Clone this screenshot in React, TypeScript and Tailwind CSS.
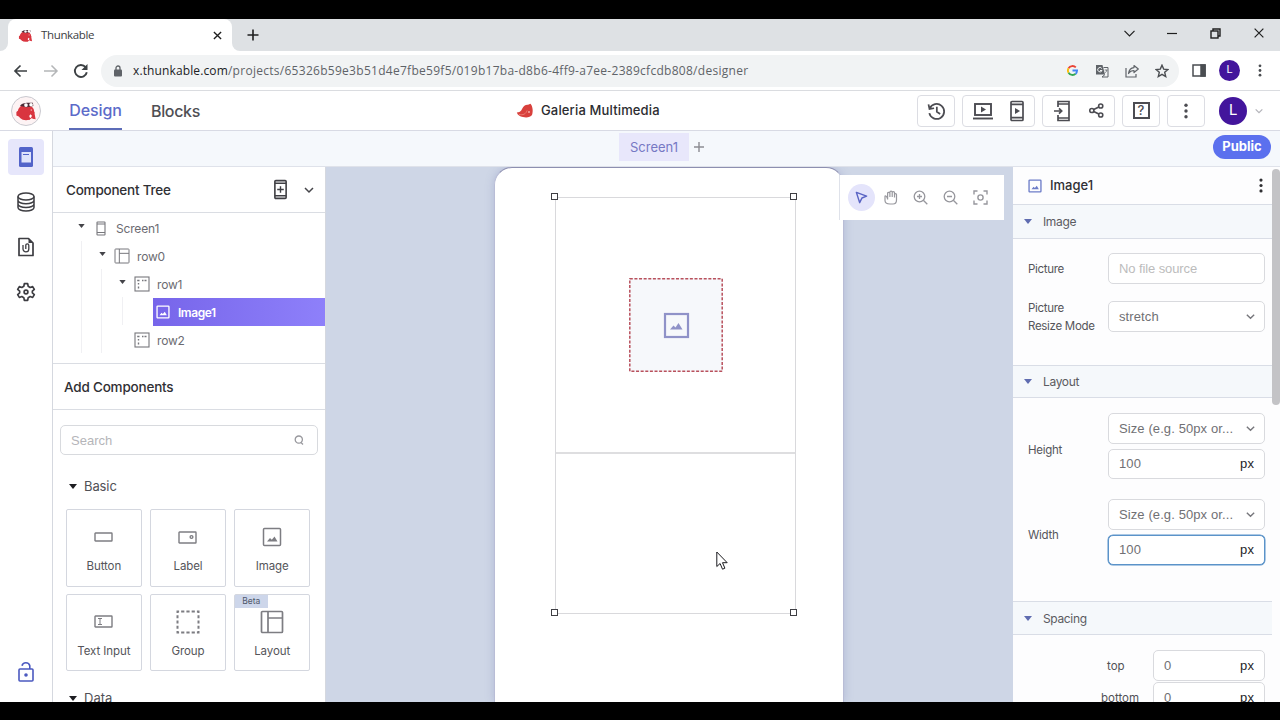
import type { ReactNode } from "react";
import clsx from "clsx";

type IconProps = { className?: string };

function Svg({
  className,
  box = "0 0 24 24",
  width = 2,
  children,
}: {
  className?: string;
  box?: string;
  width?: number;
  children: ReactNode;
}) {
  return (
    <svg
      viewBox={box}
      fill="none"
      stroke="currentColor"
      strokeWidth={width}
      className={clsx("shrink-0", className)}
    >
      {children}
    </svg>
  );
}

function Beaver({ className }: IconProps) {
  return (
    <svg viewBox="0 0 24 24" className={clsx("shrink-0", className)}>
      <ellipse cx="12" cy="13.500" rx="9.200" ry="8.500" fill="#d9353f" />
      <path d="M3.500 11.500l-2 1.500v4l4 1.500zM13 14l8-1 1.500 8-3.500-.5-1-2.500-2 3.500-3-.5z" fill="#d9353f" />
      <path d="M5.500 6.500c1-2.500 5-3.500 9-3.500h5l.5 3.500-7 1.500z" fill="#4d2a35" />
      <circle cx="12" cy="5.500" r="2" fill="#fff" />
      <circle cx="17.500" cy="5.200" r="2" fill="#fff" />
      <path d="M15.500 17.500l1.300-2 1.700 1.700-.8 1.600-1.200 1.200z" fill="#fff" />
      <circle cx="17.800" cy="11" r=".9" fill="#f3a1a5" />
    </svg>
  );
}

function Chevron({ className }: IconProps) {
  return (
    <Svg className={className} box="0 0 12 12" width={1.5}>
      <path d="M2 4l4 4 4-4" />
    </Svg>
  );
}

function Caret({ className }: IconProps) {
  return (
    <svg viewBox="0 0 8 5" className={clsx("shrink-0", className)}>
      <path d="M0 0h8L4 5z" fill="currentColor" />
    </svg>
  );
}

function Dots({ className }: IconProps) {
  return (
    <svg viewBox="0 0 4 16" fill="currentColor" className={clsx("shrink-0", className)}>
      <circle cx="2" cy="2.200" r="1.700" />
      <circle cx="2" cy="8" r="1.700" />
      <circle cx="2" cy="13.800" r="1.700" />
    </svg>
  );
}

function ImageIcon({ className, width = 1.9 }: IconProps & { width?: number }) {
  return (
    <Svg className={className} box="0 0 20 20" width={width}>
      <rect x="1.500" y="1.500" width="17" height="17" rx="1" />
      <path d="M5 14.500l3-3.500 1.800 1.800L12.500 9.500l3 5z" fill="currentColor" stroke="none" />
    </Svg>
  );
}

function LayoutIcon({ className, width = 1.8 }: IconProps & { width?: number }) {
  return (
    <Svg className={className} box="0 0 24 24" width={width}>
      <rect x="1.500" y="1.500" width="21" height="21" rx="1" />
      <path d="M8 1.500v21M8 8h14.500" />
    </Svg>
  );
}

function RowIcon({ className }: IconProps) {
  return (
    <Svg className={className} box="0 0 16 16" width={1.1}>
      <rect x="1" y="1" width="14" height="14" />
      <path d="M3.200 4.500h2.300M8 4.500h1.500M10.500 4.500h2M4.500 7v1.500M4.500 10.500v2" strokeWidth="1.400" />
    </Svg>
  );
}

function PhoneIcon({ className, children }: IconProps & { children?: ReactNode }) {
  return (
    <Svg className={className} box="0 0 16 22" width={1.7}>
      <rect x="2" y="1.500" width="12" height="19" rx="1" />
      <path d="M2 4.300h12M2 17.700h12" />
      {children}
    </Svg>
  );
}

function ScreenSmall({ className }: IconProps) {
  return (
    <Svg className={className} box="0 0 10 15" width={1.1}>
      <rect x="1" y="1" width="8" height="13" rx=".5" />
      <path d="M1 3h8M1 11.500h8" />
    </Svg>
  );
}

function BrowserTabs() {
  return (
    <div className="flex h-8 shrink-0 items-stretch bg-[#dee1e4] text-[#1f1f1f]">
      <div className="flex w-2 bg-white">
        <div className="w-full rounded-br-lg bg-[#dee1e4]" />
      </div>
      <div className="flex w-[224px] items-center rounded-t-lg bg-white pl-[10px] pr-[10px]">
        <Beaver className="size-[15px]" />
        <span className="ml-2 flex-1 font-['Open_Sans',sans-serif] text-[11.500px] tracking-[-0.350px] text-[#3c4043]">
          Thunkable
        </span>
        <Svg className="size-[9px]" box="0 0 10 10" width={1.5}>
          <path d="M1 1l8 8M9 1l-8 8" />
        </Svg>
      </div>
      <div className="flex w-2 bg-white">
        <div className="w-full rounded-bl-lg bg-[#dee1e4]" />
      </div>
      <div className="flex flex-1 items-center pl-[7px]">
        <Svg className="size-3" box="0 0 12 12" width={1.6}>
          <path d="M6 .5v11M.5 6h11" />
        </Svg>
      </div>
      <div className="flex items-center pb-1 pr-[16px]">
        <Svg className="mr-[32px] h-[7px] w-[11px]" box="0 0 11 7" width={1.2}>
          <path d="M.5 .8L5.500 6l5-5.200" />
        </Svg>
        <Svg className="mr-[33px] h-[10px] w-[10px]" box="0 0 10 10" width={1.2}>
          <path d="M0 5.500h10" />
        </Svg>
        <Svg className="mr-[33px] size-[11px]" box="0 0 11 11" width={1.4}>
          <rect x="1" y="3" width="7" height="7" />
          <path d="M3 3V1h7v7H8" />
        </Svg>
        <Svg className="size-[10px]" box="0 0 11 11" width={1.3}>
          <path d="M.7 .7l9.600 9.600M10.300 .7L.7 10.300" />
        </Svg>
      </div>
    </div>
  );
}

function AddressBar() {
  return (
    <div className="flex h-10 shrink-0 items-center border-b border-[#dadce0] bg-white pl-[13px] pr-[18px]">
      <Svg className="h-4 w-[15px] text-[#3c4043]" box="0 0 15 16" width={1.7}>
        <path d="M14 8H2M7.500 2.500L2 8l5.500 5.500" />
      </Svg>
      <Svg className="ml-4 h-4 w-[15px] text-[#b4b6b8]" box="0 0 15 16" width={1.5}>
        <path d="M0 8h12.500M7.500 2.500L13 8l-5.500 5.500" />
      </Svg>
      <Svg className="ml-[14px] size-4 text-[#3c4043]" box="0 0 16 16" width={1.9}>
        <path d="M13.800 9.200A6 6 0 1 1 12.600 4.200" />
        <path d="M14.500 1v6h-6z" fill="currentColor" stroke="none" />
      </Svg>
      <div className="ml-[12px] flex h-8 w-[1078px] items-center rounded-full bg-[#f1f3f4] pl-[12px] pr-[10px]">
        <svg viewBox="0 0 10 12" className="h-[12px] w-[10px] shrink-0 text-[#5f6368]">
          <rect x="1" y="4.500" width="8" height="7" rx="1" fill="currentColor" />
          <path d="M3 5V3a2 2 0 0 1 4 0v2" fill="none" stroke="currentColor" strokeWidth="1.300" />
        </svg>
        <span className="ml-[10px] flex-1 whitespace-nowrap font-['Open_Sans',sans-serif] text-[12px] tracking-[0.280px] text-[#5f6368]">
          <span className="tracking-[0.120px] text-[#202124]">x.thunkable.com</span>
          /projects/65326b59e3b51d4e7fbe59f5/019b17ba-d8b6-4ff9-a7ee-2389cfcdb808/designer
        </span>
        <svg viewBox="0 0 12 12" className="size-[11px] shrink-0" fill="none" strokeWidth="2">
          <path d="M9.600 2.600A5 5 0 0 0 1.700 3.600" stroke="#ea4335" />
          <path d="M1.700 3.500a5 5 0 0 0 0 5" stroke="#fbbc05" />
          <path d="M1.700 8.400a5 5 0 0 0 7.800 1.100" stroke="#34a853" />
          <path d="M6 6h5a5 5 0 0 1-1.600 3.600" stroke="#4285f4" />
        </svg>
        <svg viewBox="0 0 14 14" className="ml-[17px] size-[14px] shrink-0">
          <path d="M1 1h6.500l2.500 9.500H1z" fill="#5f6368" />
          <path d="M8.500 3.500H13V13H7l3-2.500" fill="none" stroke="#5f6368" />
          <path d="M6.800 4.500A2.200 2.200 0 1 0 7 6.500H5" fill="none" stroke="#f1f3f4" />
          <path d="M9.600 6h2.800M11.800 6c-.2 1.500-1 2.200-1.600 2.800" fill="none" stroke="#5f6368" strokeWidth=".8" />
        </svg>
        <Svg className="ml-[16px] size-[14px] text-[#5f6368]" box="0 0 14 14" width={1.2}>
          <path d="M1 4v9h10v-3" />
          <path d="M9 1.500L13.300 5 9 8.500V6.500C6.500 6.500 4.800 7.500 3.500 9.500 4 6 6 3.800 9 3.600z" strokeLinejoin="round" />
        </Svg>
        <Svg className="ml-4 size-[14px] text-[#4a4d51]" box="0 0 14 14" width={1.4}>
          <path d="M7 1.200l1.700 3.900 4.200.4-3.200 2.800 1 4.200L7 10.300l-3.700 2.200 1-4.200L1.100 5.500l4.200-.4z" />
        </Svg>
      </div>
      <Svg className="ml-[13px] h-[13px] w-[14px] text-[#4a4d51]" box="0 0 14 13" width={1.5}>
        <path d="M1 1h12v11H1z" />
        <path d="M9 1h4v11H9z" fill="currentColor" />
      </Svg>
      <div className="ml-[13px] flex size-[21px] items-center justify-center rounded-full bg-[#43159c] font-['Roboto',sans-serif] text-[11px] text-white">
        L
      </div>
      <Dots className="ml-[18px] h-[13px] w-[4px] text-[#4a4d51]" />
    </div>
  );
}

function HeaderBox({ className, children }: { className?: string; children: ReactNode }) {
  return (
    <div
      className={clsx(
        "flex h-8 shrink-0 items-center justify-center rounded-[4px] border border-[#dcdde3] text-[#4c4c52]",
        className,
      )}
    >
      {children}
    </div>
  );
}

function AppHeader() {
  return (
    <div className="flex h-10 shrink-0 items-stretch border-b border-[#d8dae4] bg-white pl-[11px]">
      <div className="mt-[5px] flex size-[30px] items-center justify-center rounded-full border border-[#c9c9cf] bg-[#fdf3f4]">
        <Beaver className="size-[22px]" />
      </div>
      <div className="ml-7 flex w-[53px] justify-center border-b-2 border-[#5c6cb8] pt-[7px] text-[16px] font-medium tracking-[-0.1px] text-[#5c6bc9]">
        Design
      </div>
      <div className="ml-[29px] w-[52px] pt-[7.500px] text-[16px] font-medium tracking-[-0.350px] text-[#4f4f54]">
        Blocks
      </div>
      <div className="ml-[313px] flex w-[150px] items-center whitespace-nowrap">
        <svg viewBox="0 0 18 15" className="h-[15px] w-[18px] shrink-0">
          <path
            d="M.8 9.500C3 9.500 5 8.500 6.300 5.500 7.500 3 9.500 1.500 12 1.800L14.500.8C16.500 3 17.500 8 16 12c-1.500 2.500-6 2.800-9 2C4 13.500 1.500 12 .8 9.500z"
            fill="#d8403c"
          />
          <path d="M3 11.300c4 1.200 7-.3 8-3.800" fill="none" stroke="#ec7a70" />
          <circle cx="13" cy="9" r="1" fill="#f3aaa4" />
        </svg>
        <span className="ml-[7px] text-[13px] font-medium tracking-[0.150px] text-[#2c2c30]">
          Galeria Multimedia
        </span>
      </div>
      <div className="ml-auto flex items-center pr-[16px]">
        <HeaderBox className="mr-[7px] w-[38px]">
          <Svg className="size-[20px]" box="0 0 24 24" width={2.1}>
            <path d="M4.500 9A9 9 0 1 1 4 14.500M3 4l1.200 5.500 5.500-.8M13 7v6l4 2.500" />
          </Svg>
        </HeaderBox>
        <HeaderBox className="mr-[7px] w-[73px] gap-[15px]">
          <Svg className="h-[18px] w-[22px]" box="0 0 22 18" width={1.9}>
            <rect x="3" y="2" width="16" height="11" />
            <path d="M1 16.500h20" />
            <path d="M9 4.500l5 3-5 3z" fill="currentColor" stroke="none" />
          </Svg>
          <PhoneIcon className="h-[22px] w-4">
            <path d="M6 8l5 3-5 3z" fill="currentColor" stroke="none" />
          </PhoneIcon>
        </HeaderBox>
        <HeaderBox className="mr-[7px] w-[73px] gap-[19px]">
          <Svg className="h-[22px] w-4" box="0 0 16 22" width={1.7}>
            <path d="M4 7V1.500h11v19H4V15M4 4h11M4 18h11M0 11h7.500M5 8.300L7.700 11 5 13.700" />
          </Svg>
          <Svg className="size-[15px]" box="0 0 16 16" width={1.7}>
            <circle cx="3" cy="8" r="2.200" />
            <circle cx="12.500" cy="3.200" r="2.200" />
            <circle cx="12.500" cy="12.800" r="2.200" />
            <path d="M5 7l5.500-2.800M5 9l5.500 2.800" />
          </Svg>
        </HeaderBox>
        <HeaderBox className="mr-[7px] w-[38px]">
          <div className="flex size-[17px] items-center justify-center border-2 border-current text-[13px] font-medium leading-none">
            ?
          </div>
        </HeaderBox>
        <HeaderBox className="mr-[14px] w-[38px]">
          <Dots className="h-4 w-[4px]" />
        </HeaderBox>
        <div className="flex size-7 items-center justify-center rounded-full bg-[#43159c] font-['Roboto',sans-serif] text-[15px] text-white">
          L
        </div>
        <Chevron className="ml-[7px] size-[10px] text-[#b5b5bb]" />
      </div>
    </div>
  );
}

function Rail() {
  return (
    <div className="flex w-[53px] shrink-0 flex-col items-center border-r border-[#d5d8df] bg-white pb-[20px] pt-2 text-[#3d3d42]">
      <div className="flex size-9 items-center justify-center rounded-[4px] bg-[#e6e6fb]">
        <svg viewBox="0 0 14 20" className="h-5 w-[14px]">
          <rect width="14" height="20" rx="1.500" fill="#5263c9" />
          <rect x="2.500" y="5" width="9.500" height="10.500" fill="#dfe3fb" />
          <path d="M4 7.500h6" stroke="#5263c9" />
        </svg>
      </div>
      <Svg className="mt-[17px] size-5" box="0 0 20 20" width={1.5}>
        <ellipse cx="10" cy="4.500" rx="8" ry="3.500" />
        <path d="M2 4.500v11c0 2 3.500 3.500 8 3.500s8-1.500 8-3.500v-11M2 8.200c0 2 3.500 3.500 8 3.500s8-1.500 8-3.500M2 12c0 2 3.500 3.500 8 3.500s8-1.500 8-3.500" />
      </Svg>
      <Svg className="mt-[25px] h-5 w-4" box="0 0 16 20" width={1.7}>
        <path d="M1 1.500h9.500L15 6v12.500H1z" strokeLinejoin="round" />
        <path
          d="M5 8v4a2.900 2.900 0 0 0 5.800 0V8.300a1.500 1.500 0 0 0-3 0V12"
          strokeWidth="1.300"
        />
        <path d="M10.500 1.500V6H15z" fill="currentColor" stroke="none" />
      </Svg>
      <Svg className="mt-[25px] size-[20px]" box="0 0 24 24" width={2}>
        <path
          d="M10 2h4l.6 3.100 2.400 1.400 3-1 2 3.400L19.600 11v2l2.400 2.100-2 3.400-3-1-2.400 1.400L14 22h-4l-.6-3.100L7 17.500l-3 1-2-3.400L4.400 13v-2L2 8.900l2-3.400 3 1 2.400-1.400z"
          strokeLinejoin="round"
        />
        <circle cx="12" cy="12" r="2.300" />
      </Svg>
      <Svg className="mt-auto h-[21px] w-4 text-[#4b59c0]" box="0 0 16 21" width={1.6}>
        <rect x="1" y="8" width="14" height="12" rx="1" />
        <path d="M4 4.800A4 4 0 0 1 11.800 4.800V8" />
        <circle cx="8" cy="14" r="1" fill="currentColor" />
      </Svg>
    </div>
  );
}

function ScreenTabs() {
  return (
    <div className="flex h-9 shrink-0 items-center border-b border-[#dfe2ea] bg-[#f5f8fc] pl-[566px] pr-[9px]">
      <div className="mb-[3px] flex h-7 w-[70px] items-center justify-center bg-[#e8e7fb] pt-px text-[13px] text-[#7678c4]">
        Screen1
      </div>
      <Svg className="mb-[3px] ml-[5px] size-[10px] text-[#8c8c92]" box="0 0 10 10" width={1.4}>
        <path d="M5 0v10M0 5h10" />
      </Svg>
      <div className="mb-[3px] ml-auto flex h-6 w-[58px] items-center justify-center rounded-full bg-[#5b70ee] text-[13px] font-bold text-white">
        Public
      </div>
    </div>
  );
}

function TreeRow({
  indent,
  open,
  icon,
  label,
}: {
  indent: string;
  open?: boolean;
  icon: ReactNode;
  label: string;
}) {
  return (
    <div className={clsx("flex h-7 items-center text-[12px] text-[#6b6b71]", indent)}>
      <div className="mb-1 w-[13px]">
        {open && <Caret className="h-[4px] w-[7px] text-[#444449]" />}
      </div>
      <div className="flex w-[25px] justify-center pr-[5px] text-[#77777c]">{icon}</div>
      <span className="pt-px tracking-[-0.180px]">{label}</span>
    </div>
  );
}

function ComponentTree() {
  return (
    <div className="h-[197px] shrink-0 border-b border-[#dadde3]">
      <div className="flex h-[46px] items-center border-b border-[#dadde3] pl-[13px] pr-[10px]">
        <span className="pt-px text-[13.500px] font-medium tracking-[-0.220px] text-[#303034]">
          Component Tree
        </span>
        <PhoneIcon className="ml-auto h-[21px] w-[15px] text-[#3f3f44]">
          <path d="M8 7.500v7M4.500 11h7" strokeWidth="1.500" />
        </PhoneIcon>
        <Chevron className="ml-[15px] size-3 text-[#45454a]" />
      </div>
      <div className="relative pt-px">
        <div className="absolute left-[28px] top-[28px] h-[112px] w-px bg-[#f0f0f3]" />
        <div className="absolute left-[48px] top-[56px] h-[84px] w-px bg-[#f0f0f3]" />
        <div className="absolute left-[69px] top-[84px] h-[28px] w-px bg-[#f0f0f3]" />
        <TreeRow indent="pl-[25px]" open icon={<ScreenSmall className="h-[15px] w-[10px]" />} label="Screen1" />
        <TreeRow indent="pl-[46px]" open icon={<LayoutIcon className="size-4" width={1.5} />} label="row0" />
        <TreeRow indent="pl-[66px]" open icon={<RowIcon className="size-4" />} label="row1" />
        <div className="ml-[100px] flex h-7 items-center bg-linear-to-r from-[#7765ea] to-[#8e80fa] pl-[3px] text-white">
          <ImageIcon className="size-[14px]" />
          <span className="ml-[8px] pt-px text-[12px] font-semibold tracking-[-0.450px]">Image1</span>
        </div>
        <TreeRow indent="pl-[66px]" icon={<RowIcon className="size-4" />} label="row2" />
      </div>
    </div>
  );
}

const basic = [
  {
    label: "Button",
    icon: (
      <Svg className="h-[10px] w-[19px]" box="0 0 19 10" width={1.4}>
        <rect x="1" y="1" width="17" height="8" rx=".5" />
      </Svg>
    ),
  },
  {
    label: "Label",
    icon: (
      <Svg className="h-[13px] w-[19px]" box="0 0 19 13" width={1.4}>
        <rect x="1" y="1" width="17" height="11" rx=".5" />
        <circle cx="13.500" cy="6" r="1.400" />
      </Svg>
    ),
  },
  { label: "Image", icon: <ImageIcon className="size-5" width={1.5} /> },
  {
    label: "Text Input",
    icon: (
      <Svg className="h-[13px] w-[19px]" box="0 0 19 13" width={1.4}>
        <rect x="1" y="1" width="17" height="11" rx=".5" />
        <path d="M4 3.500h4M6 3.500v6M4 9.500h4" strokeWidth="1" />
      </Svg>
    ),
  },
  {
    label: "Group",
    icon: (
      <Svg className="size-6" box="0 0 24 24" width={2}>
        <rect x="1.500" y="1.500" width="21" height="21" strokeDasharray="3.200 2.050" strokeDashoffset="1.600" />
      </Svg>
    ),
  },
  { label: "Layout", icon: <LayoutIcon className="size-6" width={1.7} />, beta: true },
];

function AddComponents() {
  return (
    <div className="flex-1">
      <div className="flex h-[46px] items-center border-b border-[#dadde3] pl-[11px] pt-px text-[13.500px] font-medium tracking-[-0.2px] text-[#303034]">
        Add Components
      </div>
      <div className="mx-[7px] mt-[15px] flex h-[30px] w-[258px] items-center rounded-[5px] border border-[#d8dade] pl-[10px] pr-[13px] font-['Liberation_Sans',sans-serif] text-[13px] text-[#b5b5b9]">
        <span className="flex-1 pt-px">Search</span>
        <Svg className="size-[10px] text-[#98989d]" box="0 0 10 10" width={1.3}>
          <circle cx="4.800" cy="4.600" r="3.600" />
          <path d="M7 7.500L9 9.500" />
        </Svg>
      </div>
      <div className="mt-[21px] flex h-5 items-center pl-4 text-[13px] text-[#515156]">
        <Caret className="h-[5px] w-[8px] text-[#1e1e22]" />
        <span className="ml-[7px] pt-px tracking-[-0.1px]">Basic</span>
      </div>
      <div className="ml-[12.500px] mt-[13px] grid w-[245px] grid-cols-3 gap-x-[7.500px] gap-y-[7px]">
        {basic.map((item) => (
          <div
            key={item.label}
            className="relative flex h-[77.500px] flex-col items-center rounded-[2px] border border-[#d4d7df] pt-[15px] text-[#7d7d82]"
          >
            {item.beta && (
              <span className="absolute left-0 top-0 h-[13px] w-[33px] bg-[#cdd6ea] text-center text-[8.500px] leading-[13px] text-[#50596b]">
                Beta
              </span>
            )}
            <div className="flex h-6 items-center">{item.icon}</div>
            <span className="mt-[9px] whitespace-nowrap text-[11.500px] leading-4 tracking-[-0.1px] text-[#55555a]">
              {item.label}
            </span>
          </div>
        ))}
      </div>
      <div className="mt-[17px] flex h-5 items-center pl-4 text-[13px] text-[#515156]">
        <Caret className="h-[5px] w-[8px] text-[#1e1e22]" />
        <span className="ml-[7px] pt-px">Data</span>
      </div>
    </div>
  );
}

function Canvas() {
  const handle = "absolute size-[7px] border-[1.500px] border-[#3f3f44] bg-white";
  return (
    <div className="relative flex-1 overflow-hidden bg-[#ced6e6]">
      <div className="ml-[168px] h-full w-[350px] rounded-t-[18px] border border-b-0 border-[#b9bdd6] border-t-[#8d8fb0] bg-white pl-[60px] pt-[29px] shadow-[0_0_8px_rgba(120,130,180,0.350)]">
        <div className="relative flex h-[417px] w-[241px] flex-col border border-[#d9d9dc]">
          <div className="flex h-[256px] items-center justify-center border-b-2 border-[#dedee0]">
            <div className="flex size-[94px] items-center justify-center bg-[#f6f8fb]">
              <svg viewBox="0 0 94 94" className="size-[94px] text-[#8f92c8]">
                <rect x=".8" y=".8" width="92.400" height="92.400" fill="none" stroke="#b9505c" strokeWidth="1.500" strokeDasharray="3 1.620" />
                <rect x="36" y="36" width="23" height="23" fill="none" stroke="currentColor" strokeWidth="2.200" />
                <path d="M41 51.500l3.500-4 2 2 3-4.500 4 6.500z" fill="currentColor" />
              </svg>
            </div>
          </div>
          <span className={clsx(handle, "-left-[5px] -top-[5px]")} />
          <span className={clsx(handle, "-right-[2px] -top-[5px]")} />
          <span className={clsx(handle, "-bottom-[3px] -left-[5px]")} />
          <span className={clsx(handle, "-bottom-[3px] -right-[2px]")} />
        </div>
      </div>
      <div className="absolute left-[513px] top-[8px] flex h-[45px] w-[165px] items-center gap-[15px] border-l border-[#dfe2ea] bg-white pl-[8px] text-[#97979d]">
        <div className="-mr-[7px] flex size-[27px] items-center justify-center rounded-full bg-[#e4e4fb] text-[#5a64c4]">
          <Svg className="size-[13px]" box="0 0 14 14" width={1.6}>
            <path d="M1.500 1.500l11 4-5 2-2.500 5z" strokeLinejoin="round" />
          </Svg>
        </div>
        <Svg className="size-[15px]" box="0 0 15 15" width={1.2}>
          <path d="M2 6v4.500C2 13 4 14 7 14h3c2.500 0 3.500-1.500 3.500-4V4.500c0-1.300-2-1.300-2 0V7.500M11.500 7V2.500c0-1.300-2.300-1.300-2.300 0V7M9.200 7V2c0-1.300-2.300-1.300-2.300 0v5M6.900 7V3.300c0-1.300-2.300-1.300-2.300 0V9.500C4.600 7 2 4.500 2 6.500" />
        </Svg>
        <Svg className="size-[15px]" box="0 0 15 15" width={1.3}>
          <circle cx="6.500" cy="6.500" r="5.300" />
          <path d="M10.300 10.300l4 4M6.500 4v5M4 6.500h5" />
        </Svg>
        <Svg className="size-[15px]" box="0 0 15 15" width={1.3}>
          <circle cx="6.500" cy="6.500" r="5.300" />
          <path d="M10.300 10.300l4 4M4 6.500h5" />
        </Svg>
        <Svg className="size-[15px]" box="0 0 15 15" width={1.4}>
          <circle cx="7.500" cy="7.500" r="2.600" />
          <path d="M1 4.500V1h3.500M10.500 1H14v3.500M14 10.500V14h-3.500M4.500 14H1v-3.500" />
        </Svg>
      </div>
      <svg viewBox="0 0 12 19" className="absolute left-[390px] top-[384px] h-[19px] w-[12px]">
        <path d="M.8 1v14.500l3.300-3 2.400 5.700 2.400-1-2.400-5.500h4.700z" fill="#fff" stroke="#1a1a1e" />
      </svg>
    </div>
  );
}

function Section({ label, className }: { label: string; className: string }) {
  return (
    <div className={clsx("flex items-center border-y border-[#d9dde6] bg-[#f5f8fb] pl-[11px]", className)}>
      <Caret className="h-[5px] w-[8px] text-[#5f6cb0]" />
      <span className="ml-[11px] pt-px text-[12px] tracking-[-0.350px] text-[#5b5b61]">{label}</span>
    </div>
  );
}

function Field({
  value,
  muted,
  select,
  unit,
  focus,
  className = "w-[157px]",
}: {
  value: string;
  muted?: boolean;
  select?: boolean;
  unit?: boolean;
  focus?: boolean;
  className?: string;
}) {
  return (
    <div
      className={clsx(
        "flex h-[30.500px] shrink-0 items-center whitespace-nowrap rounded-[5px] border bg-white pl-[10px] font-['Liberation_Sans',sans-serif] text-[13px] tracking-[0.1px]",
        focus ? "border-[#5b93c9] ring-[0.500px] ring-[#5b93c9]" : "border-[#d9dade]",
        select ? "pr-[8px]" : "pr-[10px]",
        className,
      )}
    >
      <span className={clsx("flex-1", muted ? "tracking-[-0.1px] text-[#bcbcbc]" : "text-[#707074]")}>{value}</span>
      {unit && <span className="text-[#252528]">px</span>}
      {select && <Chevron className="size-[11px] text-[#77777c]" />}
    </div>
  );
}

function Properties() {
  const label =
    "w-[80px] shrink-0 whitespace-pre text-[11.500px] leading-[18px] tracking-[-0.3px] text-[#55555a]";
  return (
    <div className="flex w-[267px] shrink-0 overflow-hidden bg-[#fdfdfe]">
      <div className="w-[259px] shrink-0">
        <div className="flex h-[37px] items-center pl-[15px] pr-[9px]">
          <ImageIcon className="size-[14px] text-[#6c7cc8]" />
          <span className="ml-[8px] flex-1 text-[13px] font-medium text-[#2f2f33]">Image1</span>
          <Dots className="h-[15px] w-[4px] text-[#303034]" />
        </div>
        <Section label="Image" className="h-[35px]" />
        <div className="h-[126px] pl-[15px] pt-[14px]">
          <div className="flex h-[31px] items-center">
            <span className={label}>Picture</span>
            <Field value="No file source" muted />
          </div>
          <div className="mt-[15px] flex h-[35px] items-center">
            <span className={label}>{"Picture\nResize Mode"}</span>
            <Field value="stretch" select />
          </div>
        </div>
        <Section label="Layout" className="h-[33px]" />
        <div className="flex h-[203px] flex-col gap-[20px] pl-[15px] pt-[15px]">
          <div className="flex items-center">
            <span className={clsx(label, "pt-[7px]")}>Height</span>
            <div className="flex flex-col gap-[5px]">
              <Field value="Size (e.g. 50px or..." select />
              <Field value="100" unit />
            </div>
          </div>
          <div className="flex items-center">
            <span className={clsx(label, "pt-1.5")}>Width</span>
            <div className="flex flex-col gap-[5px]">
              <Field value="Size (e.g. 50px or..." select />
              <Field value="100" unit focus />
            </div>
          </div>
        </div>
        <Section label="Spacing" className="h-[34px]" />
        <div className="flex flex-col items-end gap-[1.500px] pr-[7px] pt-[15px] text-[11.500px] text-[#515156]">
          <div className="flex items-center">
            <span className="w-[46px] pt-0.5">top</span>
            <Field value="0" unit className="w-[112px]" />
          </div>
          <div className="flex items-center">
            <span className="w-[52px] pt-0.5">bottom</span>
            <Field value="0" unit className="w-[112px]" />
          </div>
        </div>
      </div>
      <div className="w-2 pt-[2px]">
        <div className="h-[236px] rounded-full bg-[#c3c3c6]" />
      </div>
    </div>
  );
}

export default function App() {
  return (
    <div className="flex h-[720px] w-[1280px] flex-col overflow-hidden bg-black pb-[18px] pt-[19px] font-['Inter',sans-serif]">
      <BrowserTabs />
      <AddressBar />
      <AppHeader />
      <div className="flex min-h-0 flex-1 overflow-hidden">
        <Rail />
        <div className="flex min-w-0 flex-1 flex-col">
          <ScreenTabs />
          <div className="flex min-h-0 flex-1">
            <div className="flex w-[273px] shrink-0 flex-col overflow-hidden border-r border-[#d5d8df] bg-white">
              <ComponentTree />
              <AddComponents />
            </div>
            <Canvas />
            <Properties />
          </div>
        </div>
      </div>
    </div>
  );
}
